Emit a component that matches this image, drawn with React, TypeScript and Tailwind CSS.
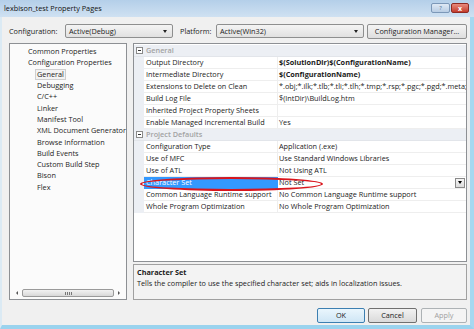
import React from 'react'

const treeItems: [string, number, boolean?][] = [
    ['Common Properties', 0],
    ['Configuration Properties', 0],
    ['General', 1, true],
    ['Debugging', 1],
    ['C/C++', 1],
    ['Linker', 1],
    ['Manifest Tool', 1],
    ['XML Document Generator', 1],
    ['Browse Information', 1],
    ['Build Events', 1],
    ['Custom Build Step', 1],
    ['Bison', 1],
    ['Flex', 1],
]

type Prop = { name: string; value: string; bold?: boolean; selected?: boolean }

const generalProps: Prop[] = [
    { name: 'Output Directory', value: '$(SolutionDir)$(ConfigurationName)', bold: true },
    { name: 'Intermediate Directory', value: '$(ConfigurationName)', bold: true },
    { name: 'Extensions to Delete on Clean', value: '*.obj;*.ilk;*.tlb;*.tli;*.tlh;*.tmp;*.rsp;*.pgc;*.pgd;*.meta;$(TargetPath)' },
    { name: 'Build Log File', value: '$(IntDir)\\BuildLog.htm' },
    { name: 'Inherited Project Property Sheets', value: '' },
    { name: 'Enable Managed Incremental Build', value: 'Yes' },
]

const defaultProps: Prop[] = [
    { name: 'Configuration Type', value: 'Application (.exe)' },
    { name: 'Use of MFC', value: 'Use Standard Windows Libraries' },
    { name: 'Use of ATL', value: 'Not Using ATL' },
    { name: 'Character Set', value: 'Not Set', selected: true },
    { name: 'Common Language Runtime support', value: 'No Common Language Runtime support' },
    { name: 'Whole Program Optimization', value: 'No Whole Program Optimization' },
]

const Collapse = () => (
    <div className="w-[7px] h-[7px] border border-[#8a8a8a] bg-white flex items-center justify-center">
        <div className="w-[3px] h-px bg-[#333]" />
    </div>
)

const Category = ({ label }: { label: string }) => (
    <div className="flex h-[12px] bg-[#eceff4] border-b border-[#e2e5ea]">
        <div className="w-[11px] shrink-0 flex items-center justify-center">
            <Collapse />
        </div>
        <div className="pl-[1px] flex items-center font-semibold text-[#a3a3a3]">{label}</div>
    </div>
)

const PropRow = ({ p }: { p: Prop }) => (
    <div className="flex h-[12px]">
        <div className="w-[10px] shrink-0 bg-[#eceff4]" />
        <div
            className={`w-[134px] shrink-0 pl-[2px] flex items-center whitespace-nowrap overflow-hidden border-b border-r ${
                p.selected ? 'bg-[#3399ff] text-white border-[#3399ff]' : 'border-[#eeeeee]'
            }`}>
            {p.name}
        </div>
        <div className="flex-1 min-w-0 pl-[1px] flex items-center whitespace-nowrap overflow-hidden border-b border-[#eeeeee]">
            <span className={p.bold ? 'font-bold' : ''}>{p.value}</span>
            {p.selected && (
                <div className="ml-auto mr-[1px] w-[10px] h-[10px] border border-[#8a8a8a] bg-gradient-to-b from-[#f6f6f6] to-[#dcdcdc] flex items-center justify-center">
                    <div className="w-0 h-0 border-l-[2px] border-r-[2px] border-t-[3px] border-l-transparent border-r-transparent border-t-black" />
                </div>
            )}
        </div>
    </div>
)

const Combo = ({ text, width }: { text: string; width: string }) => (
    <div className={`${width} shrink-0 h-[14px] border border-[#8e8f8f] rounded-[2px] bg-gradient-to-b from-[#f4f4f4] to-[#e1e1e1] flex items-center pl-[3px] pr-[5px]`}>
        <span className="flex-1">{text}</span>
        <div className="w-0 h-0 border-l-[2px] border-r-[2px] border-t-[3px] border-l-transparent border-r-transparent border-t-[#222]" />
    </div>
)

const App = () => {
    return (
        <div className="w-[474px] h-[329px] flex flex-col overflow-hidden text-[7.3px] text-[#1b1b1b] font-['Open_Sans',sans-serif] bg-[#f0f0f0]">
            {/* title bar */}
            <div className="h-[17px] shrink-0 flex items-center bg-gradient-to-b from-[#b4cfe9] to-[#cfe1f2] pl-[4px] pr-[5px]">
                <span className="text-[#111]">lexbison_test Property Pages</span>
                <div className="ml-auto flex gap-[1px] self-start mt-[3px]">
                    <div className="w-[19px] h-[10px] rounded-[2px] border border-[#7c98b8] bg-gradient-to-b from-[#dfe9f5] to-[#b9cde4] flex items-center justify-center text-[6px] text-[#4a6a90] leading-none">?</div>
                    <div className="w-[18px] h-[10px] rounded-[2px] border border-[#8f2a23] bg-gradient-to-b from-[#e8897c] to-[#c33a2c] flex items-center justify-center text-[7px] text-white font-bold leading-none">x</div>
                </div>
            </div>

            {/* body */}
            <div className="flex-1 flex flex-col pl-[7px] pr-[3px] pt-[7px] border-l-2 border-l-[#dbeaf4] border-r-4 border-r-[#a6d8f0] border-b-4 border-b-[#9ad3ee]">
                <div className="h-[14px] flex items-center">
                    <span className="w-[56px] shrink-0">Configuration:</span>
                    <Combo text="Active(Debug)" width="w-[108px]" />
                    <span className="ml-[7px] w-[36px] shrink-0">Platform:</span>
                    <Combo text="Active(Win32)" width="w-[148px]" />
                    <div className="ml-auto w-[100px] h-[15px] border border-[#8e8f8f] rounded-[2px] bg-gradient-to-b from-[#f4f4f4] to-[#dedede] flex items-center justify-center">
                        Configuration Manager...
                    </div>
                </div>

                <div className="mt-[5px] h-[257px] flex gap-[6px]">
                    {/* tree */}
                    <div className="w-[118px] shrink-0 border border-[#8d9094] bg-[#fbfbfb] flex flex-col">
                        <div className="flex-1 pt-[2px]">
                            {treeItems.map(([label, level, sel]) => (
                                <div key={label} className={`h-[11.3px] flex items-center whitespace-nowrap ${level ? 'pl-[25px]' : 'pl-[16px]'}`}>
                                    <span className={`px-[1px] leading-[9px] ${sel ? 'border border-[#cfcfcf] bg-[#f3f3f3]' : 'border border-transparent'}`}>{label}</span>
                                </div>
                            ))}
                        </div>
                        <div className="h-[10px] mx-[3px] mb-[1px] flex items-center">
                            <div className="w-[8px] flex justify-center">
                                <div className="w-0 h-0 border-t-[2px] border-b-[2px] border-r-[2px] border-t-transparent border-b-transparent border-r-[#555]" />
                            </div>
                            <div className="flex-1 h-[8px] mx-[1px] border border-[#9a9a9a] rounded-[2px] bg-gradient-to-b from-[#f2f2f2] to-[#d8d8d8] flex items-center justify-center">
                                <div className="flex gap-[1px]">
                                    <div className="w-px h-[3px] bg-[#777]" />
                                    <div className="w-px h-[3px] bg-[#777]" />
                                    <div className="w-px h-[3px] bg-[#777]" />
                                    <div className="w-px h-[3px] bg-[#777]" />
                                </div>
                            </div>
                            <div className="w-[8px] flex justify-center">
                                <div className="w-0 h-0 border-t-[2px] border-b-[2px] border-l-[2px] border-t-transparent border-b-transparent border-l-[#555]" />
                            </div>
                        </div>
                    </div>

                    {/* property grid */}
                    <div className="flex-1 min-w-0 flex flex-col">
                        <div className="relative h-[219px] border border-[#8d9094] bg-white pt-[1px]">
                            <Category label="General" />
                            {generalProps.map((p) => (
                                <PropRow key={p.name} p={p} />
                            ))}
                            <Category label="Project Defaults" />
                            {defaultProps.map((p) => (
                                <PropRow key={p.name} p={p} />
                            ))}
                            {/* annotation */}
                            <div className="absolute left-[6px] top-[133px] w-[183px] h-[14px] rounded-[50%] border-2 border-[#d9151c] pointer-events-none" />
                        </div>
                        <div className="mt-[2px] flex-1 border border-[#a0a0a0] bg-[#f3f3f3] pl-[3px] pt-[2px]">
                            <div className="h-[11px] flex items-center font-bold">Character Set</div>
                            <div className="h-[11px] flex items-center whitespace-nowrap">
                                Tells the compiler to use the specified character set; aids in localization issues.
                            </div>
                        </div>
                    </div>
                </div>

                <div className="mt-[8px] h-[15px] flex justify-end">
                    <div className="w-[48px] border border-[#3c7fb1] rounded-[2px] bg-gradient-to-b from-[#eaf6fd] to-[#cfe6f5] flex items-center justify-center">OK</div>
                    <div className="ml-[3px] w-[49px] border border-[#707070] rounded-[2px] bg-gradient-to-b from-[#f2f2f2] to-[#dadada] flex items-center justify-center">Cancel</div>
                    <div className="ml-[4px] w-[46px] border border-[#adb2b5] rounded-[2px] bg-[#f4f4f4] text-[#a0a0a0] flex items-center justify-center">Apply</div>
                </div>
            </div>
        </div>
    )
}

export default App
